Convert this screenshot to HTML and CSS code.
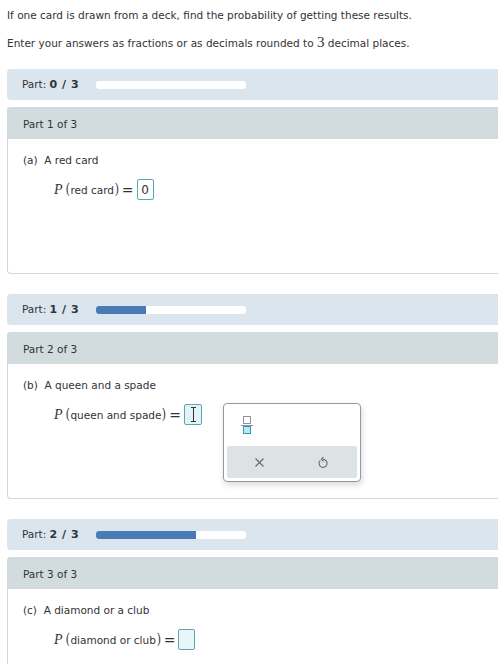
FILE: index.html
```html
<!DOCTYPE html>
<html>
<head>
<meta charset="utf-8">
<link rel="stylesheet" href="styles.css">
</head>
<body>
<div class="page">
  <p class="intro">If one card is drawn from a deck, find the probability of getting these results.</p>
  <p class="intro second">Enter your answers as fractions or as decimals rounded to <span class="num">3</span> decimal places.</p>

  <section class="part">
    <div class="part-bar"><span class="part-label">Part: <b>0 / 3</b></span><div class="progress"><div class="fill" style="width:0%"></div></div></div>
    <div class="card">
      <div class="card-head">Part 1 of 3</div>
      <div class="card-body">
        <div class="question">(a)&nbsp; A red card</div>
        <div class="math-row">
          <span class="mi">P</span><span class="paren">(</span><span class="mtext">red card</span><span class="paren">)</span><span class="eq">=</span><span class="answer filled">0</span>
        </div>
      </div>
    </div>
  </section>

  <section class="part">
    <div class="part-bar"><span class="part-label">Part: <b>1 / 3</b></span><div class="progress"><div class="fill" style="width:33.3%"></div></div></div>
    <div class="card">
      <div class="card-head">Part 2 of 3</div>
      <div class="card-body">
        <div class="question">(b)&nbsp; A queen and a spade</div>
        <div class="math-row">
          <span class="mi">P</span><span class="paren">(</span><span class="mtext">queen and spade</span><span class="paren">)</span><span class="eq">=</span><span class="answer active"><span class="caret"></span></span>
          <div class="keypad">
            <div class="keys">
              <span class="frac-key">
                <svg width="12" height="18" viewBox="0 0 12 18">
                  <rect x="2.5" y="0.5" width="7" height="7" fill="#fff" stroke="#8a969b"/>
                  <line x1="0" y1="9.5" x2="12" y2="9.5" stroke="#8a969b" stroke-width="1"/>
                  <rect x="2.5" y="10.5" width="7" height="7" fill="#bfe6f0" stroke="#2d9bb5"/>
                </svg>
              </span>
            </div>
            <div class="actions">
              <svg class="icon" width="11" height="11" viewBox="0 0 11 11"><path d="M1.5 1.5 L9.5 9.5 M9.5 1.5 L1.5 9.5" stroke="#5d6d73" stroke-width="1.1" fill="none"/></svg>
              <svg class="icon" width="12" height="13" viewBox="0 0 12 13"><path d="M3.2 4.6 A4 4 0 1 0 6 3.4" stroke="#5d6d73" stroke-width="1.1" fill="none"/><path d="M6.4 1.2 L4.4 3.3 L6.4 5.4" stroke="#5d6d73" stroke-width="1.1" fill="none"/></svg>
            </div>
          </div>
        </div>
      </div>
    </div>
  </section>

  <section class="part">
    <div class="part-bar"><span class="part-label">Part: <b>2 / 3</b></span><div class="progress"><div class="fill" style="width:66.6%"></div></div></div>
    <div class="card">
      <div class="card-head">Part 3 of 3</div>
      <div class="card-body">
        <div class="question">(c)&nbsp; A diamond or a club</div>
        <div class="math-row">
          <span class="mi">P</span><span class="paren">(</span><span class="mtext">diamond or club</span><span class="paren">)</span><span class="eq">=</span><span class="answer"></span>
        </div>
      </div>
    </div>
  </section>
</div>
</body>
</html>
```
FILE: styles.css
```css
html, body {
  margin: 0;
  padding: 0;
  background: #fff;
  overflow: hidden;
}
.page {
  padding: 9px 0 0 7px;
  font-family: "DejaVu Sans", Tahoma, sans-serif;
  font-size: 10.5px;
  color: #333;
}
.intro {
  margin: 0;
  line-height: 13px;
}
.intro.second {
  margin-top: 14px;
}
.num {
  font-family: "Liberation Serif", serif;
  font-size: 15px;
}
.part {
  margin-top: 20px;
}
.intro.second + .part {
  margin-top: 19px;
}
.part-bar {
  height: 31px;
  background: #dae5ee;
  border-radius: 4px 0 0 4px;
  display: flex;
  align-items: center;
  padding-left: 15px;
  box-sizing: border-box;
}
.part-label {
  width: 74px;
  color: #333;
}
.part-label b {
  font-weight: bold;
  font-size: 11px;
  word-spacing: 1px;
}
.progress {
  width: 150px;
  height: 8px;
  background: #fff;
  border-radius: 3px;
  overflow: hidden;
}
.fill {
  height: 100%;
  background: #4a7bb6;
}
.card {
  margin-top: 7px;
  border-left: 1px solid #cdd8dc;
  border-bottom: 1px solid #cdd8dc;
  border-radius: 4px 0 0 4px;
}
.card-head {
  height: 32px;
  margin-left: -1px;
  background: #d2dbde;
  border-radius: 4px 0 0 0;
  display: flex;
  align-items: center;
  padding: 1px 0 0 16px;
  box-sizing: border-box;
}
.card-body {
  height: 134px;
  padding: 15px 0 0 15px;
  box-sizing: border-box;
}
.question {
  line-height: 13px;
}
.math-row {
  position: relative;
  display: flex;
  align-items: center;
  margin-top: 12px;
  margin-left: 31px;
  height: 21px;
}
.mi {
  font-family: "Liberation Serif", serif;
  font-style: italic;
  font-size: 14px;
  margin-right: 2px;
}
.paren {
  font-family: "DejaVu Serif", serif;
  font-weight: 300;
  font-size: 15px;
  line-height: 16px;
  color: #444;
  transform: scaleX(0.8);
  position: relative;
  top: -1px;
}
.mtext {
  font-size: 10.5px;
}
.eq {
  font-family: "DejaVu Sans", sans-serif;
  font-size: 14px;
  margin: 0 3px 0 2px;
}
.answer {
  width: 15px;
  height: 19px;
  border: 1px solid #5aa6b3;
  border-radius: 2px;
  background: #e8f5f9;
  display: flex;
  align-items: center;
  justify-content: center;
  font-family: "DejaVu Sans", sans-serif;
  font-size: 12px;
  color: #333;
}
.answer.filled {
  background: #fff;
}
.answer.active {
  width: 16px;
  background: #e3f3f7;
}
.caret {
  width: 1px;
  height: 15px;
  background: #333;
  position: relative;
}
.caret::before,
.caret::after {
  content: "";
  position: absolute;
  left: -2px;
  width: 5px;
  height: 1px;
  background: #333;
}
.caret::before { top: 0; }
.caret::after { bottom: 0; }
.keypad {
  position: absolute;
  left: 169px;
  top: -1px;
  width: 138px;
  height: 79px;
  background: #fff;
  border: 1px solid #8c9ca2;
  border-radius: 4px;
  box-shadow: 1px 3px 6px rgba(0,0,0,0.15);
  box-sizing: border-box;
  padding: 0 3px 3px 3px;
  display: flex;
  flex-direction: column;
}
.keys {
  height: 42px;
  display: flex;
  align-items: center;
  padding-left: 14px;
}
.frac-key svg {
  display: block;
}
.actions {
  flex: 1;
  background: #dde3e5;
  border-radius: 2px;
  display: flex;
  align-items: center;
  justify-content: space-between;
  padding: 0 28px 0 27px;
}
.icon {
  display: block;
}
```
